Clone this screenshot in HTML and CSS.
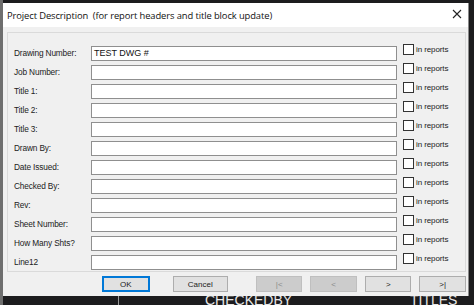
FILE: index.html
```html
<!DOCTYPE html>
<html>
<head>
<meta charset="utf-8">
<link rel="stylesheet" href="styles.css">
</head>
<body>
<div class="desk">
  <div class="dialog">
    <div class="titlebar">
      <span class="title">Project Description&nbsp; (for report headers and title block update)</span>
      <svg class="close" width="10" height="10" viewBox="0 0 10 10"><path d="M1 1 L9 9 M9 1 L1 9" stroke="#222" stroke-width="1.1" fill="none"/></svg>
    </div>
    <div class="body">
      <div class="group">
        <div class="row"><span class="lbl">Drawing Number:</span><div class="inp">TEST DWG #</div><label class="chk"><span class="box"></span>in reports</label></div>
        <div class="row"><span class="lbl">Job Number:</span><div class="inp"></div><label class="chk"><span class="box"></span>in reports</label></div>
        <div class="row"><span class="lbl">Title 1:</span><div class="inp"></div><label class="chk"><span class="box"></span>in reports</label></div>
        <div class="row"><span class="lbl">Title 2:</span><div class="inp"></div><label class="chk"><span class="box"></span>in reports</label></div>
        <div class="row"><span class="lbl">Title 3:</span><div class="inp"></div><label class="chk"><span class="box"></span>in reports</label></div>
        <div class="row"><span class="lbl">Drawn By:</span><div class="inp"></div><label class="chk"><span class="box"></span>in reports</label></div>
        <div class="row"><span class="lbl">Date Issued:</span><div class="inp"></div><label class="chk"><span class="box"></span>in reports</label></div>
        <div class="row"><span class="lbl">Checked By:</span><div class="inp"></div><label class="chk"><span class="box"></span>in reports</label></div>
        <div class="row"><span class="lbl">Rev:</span><div class="inp"></div><label class="chk"><span class="box"></span>in reports</label></div>
        <div class="row"><span class="lbl">Sheet Number:</span><div class="inp"></div><label class="chk"><span class="box"></span>in reports</label></div>
        <div class="row"><span class="lbl">How Many Shts?</span><div class="inp"></div><label class="chk"><span class="box"></span>in reports</label></div>
        <div class="row"><span class="lbl">Line12</span><div class="inp"></div><label class="chk"><span class="box"></span>in reports</label></div>
      </div>
      <div class="buttons">
        <button class="btn default">OK</button>
        <button class="btn cancel">Cancel</button>
        <button class="btn nav dis">|&lt;</button>
        <button class="btn nav dis">&lt;</button>
        <button class="btn nav">&gt;</button>
        <button class="btn nav">&gt;|</button>
      </div>
    </div>
  </div>
  <div class="under">
    <div class="vline"></div>
    <span class="big t1">CHECKEDBY</span>
    <span class="big t2">TITLES</span>
  </div>
</div>
</body>
</html>
```
FILE: styles.css
```css
html, body {
  margin: 0;
  padding: 0;
  background: #1c1c1e;
  width: 474px;
  height: 305px;
  overflow: hidden;
  font-family: "Liberation Sans", Arial, sans-serif;
}
.desk {
  width: 474px;
  height: 305px;
  padding-top: 3px;
  padding-left: 3px;
  box-sizing: border-box;
  background: linear-gradient(to right, #6e6e6e 0 3px, #1c1c1e 3px);
}
.dialog {
  width: 465px;
  height: 293px;
  background: #f0f0f0;
  position: relative;
  z-index: 2;
  box-shadow: 1px 0 0 #8a8a8a;
}
.titlebar {
  height: 24px;
  background: #ffffff;
  display: flex;
  align-items: center;
  justify-content: space-between;
  padding: 0 6px 0 4px;
}
.title {
  font-size: 9.4px;
  color: #111;
  font-family: "Open Sans", "Liberation Sans", sans-serif;
  letter-spacing: -0.1px;
}
.close { margin-top: -3px; }
.body {
  padding: 5px 2px 0 4px;
}
.group {
  border: 1px solid #dadada;
  height: 240px;
  box-sizing: border-box;
  padding: 13px 0 0 6px;
  display: flex;
  flex-direction: column;
  gap: 4px;
}
.row {
  display: flex;
  align-items: flex-start;
  height: 15px;
}
.lbl {
  width: 77px;
  font-size: 8.3px;
  color: #222;
  line-height: 14px;
  letter-spacing: -0.15px;
}
.inp {
  width: 306px;
  height: 15px;
  box-sizing: border-box;
  border: 1px solid #8f8f8f;
  background: #fff;
  font-size: 9px;
  line-height: 13px;
  padding-left: 2px;
  color: #111;
}
.chk {
  display: flex;
  align-items: center;
  margin-left: 6px;
  margin-top: -2px;
  font-size: 8px;
  color: #222;
  height: 11px;
  letter-spacing: -0.1px;
}
.box {
  width: 11px;
  height: 11px;
  box-sizing: border-box;
  border: 1px solid #333;
  background: #fff;
  margin-right: 2px;
}
.buttons {
  display: flex;
  margin-top: 4px;
  padding-left: 95px;
}
.btn {
  height: 16px;
  box-sizing: border-box;
  border: 1px solid #adadad;
  background: #e1e1e1;
  font-family: "Liberation Sans", Arial, sans-serif;
  font-size: 8px;
  color: #222;
  padding: 0;
  margin: 0;
}
.default { width: 48px; border-color: #0078d7; box-shadow: inset 0 0 0 1px #0078d7; }
.cancel { width: 56px; margin-left: 23px; }
.nav { width: 47px; margin-left: 8px; }
.cancel + .nav { margin-left: 28px; }
.dis { background: #cccccc; border-color: #bfbfbf; color: #8a8a8a; }
.under {
  position: relative;
  height: 9px;
  overflow: hidden;
}
.vline {
  position: absolute;
  left: 115px;
  top: 0;
  width: 1px;
  height: 9px;
  background: #9a9a9a;
}
.big {
  position: absolute;
  top: -3px;
  color: #e8e8e8;
  font-size: 14px;
  line-height: 14px;
  font-family: "Liberation Sans", Arial, sans-serif;
}
.t1 { left: 202px; }
.t2 { left: 407px; }
```
